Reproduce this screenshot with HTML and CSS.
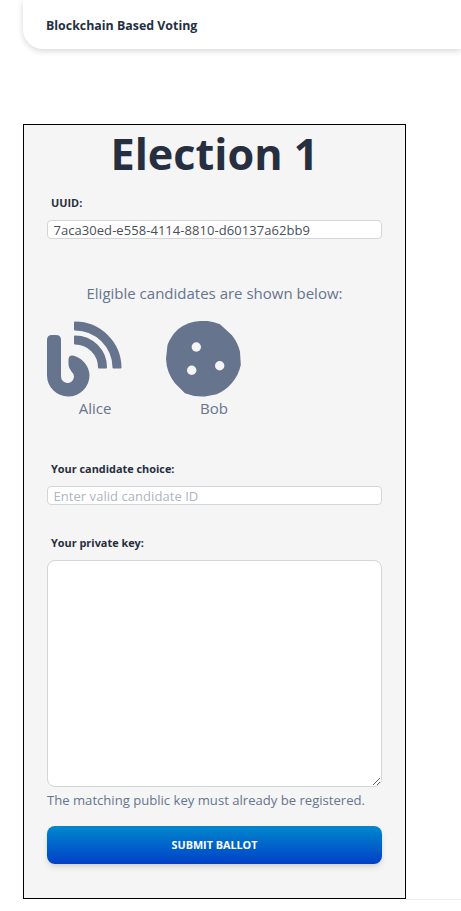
FILE: index.html
```html
<!DOCTYPE html>
<html lang="en">
<head>
<meta charset="utf-8">
<title>Blockchain Based Voting</title>
<link rel="stylesheet" href="styles.css">
</head>
<body>
<header class="nav"><span class="brand">Blockchain Based Voting</span></header>
<main class="card">
  <h1 class="title">Election 1</h1>
  <label class="label label-uuid">UUID:</label>
  <input class="field" type="text" value="7aca30ed-e558-4114-8810-d60137a62bb9">
  <p class="lead">Eligible candidates are shown below:</p>
  <div class="candidates">
    <figure class="candidate">
      <svg class="avatar" viewBox="0 0 75 76" aria-hidden="true">
        <path class="icon-fill" d="M0 19Q0 14 5 14H9Q14 14 14 19V55A6.500 6.500 0 1 0 26.500 53C24.500 50.500 21.500 47 21.500 43V39Q21.500 33.500 27 34.800A21.500 21.500 0 0 1 42.500 54A21.200 21.200 0 0 1 21 75.500A21.200 21.200 0 0 1 0 54.500Z"/>
        <path class="icon-wave" d="M28 1.5A45.5 45.5 0 0 1 73.500 46.500H66.500A38.500 38.500 0 0 0 28 8.500Z"/>
        <path class="icon-wave" d="M28 15.500A31 31 0 0 1 59 46.500H52A24 24 0 0 0 28 22.500Z"/>
      </svg>
      <figcaption>Alice</figcaption>
    </figure>
    <figure class="candidate">
      <svg class="avatar" viewBox="0 0 75 76" aria-hidden="true">
        <path class="icon-fill" d="M34 0A40 40 0 0 1 54 3.300L65.700 14A42 42 0 0 1 74 30.700L74.800 44A42 42 0 0 1 65.700 62.300A42 42 0 0 1 50.700 73.300L39 75.500A44 44 0 0 1 19 72.300L9 62.300A42 42 0 0 1 0 38L1.500 24A42 42 0 0 1 12.300 8A40 40 0 0 1 34 0Z"/>
        <circle class="icon-dot" cx="30.300" cy="26" r="4.700"/>
        <circle class="icon-dot" cx="53.700" cy="44.700" r="4.700"/>
        <circle class="icon-dot" cx="25.700" cy="49.300" r="4.700"/>
      </svg>
      <figcaption>Bob</figcaption>
    </figure>
  </div>
  <label class="label label-choice">Your candidate choice:</label>
  <input class="field" type="text" placeholder="Enter valid candidate ID">
  <label class="label label-key">Your private key:</label>
  <textarea class="keybox"></textarea>
  <p class="hint">The matching public key must already be registered.</p>
  <button class="submit" type="button">SUBMIT BALLOT</button>
</main>
<footer class="foot"></footer>
</body>
</html>
```
FILE: styles.css
```css
* { box-sizing: border-box; }
html, body { margin: 0; padding: 0; }
body {
  background: #fff;
  font-family: "Open Sans", "Noto Sans", sans-serif;
  color: #67748e;
  height: 911px;
  overflow: hidden;
}
.nav {
  height: 49px;
  margin-left: 23px;
  padding: 17px 0 0 23px;
  background: #fff;
  border-bottom-left-radius: 20px;
  box-shadow: 0 2px 6px rgba(0, 0, 0, 0.16);
  clip-path: inset(0 0 -12px -12px);
}
.brand {
  display: block;
  font-size: 12.400px;
  line-height: 17px;
  font-weight: 700;
  color: #252f40;
}
.card {
  width: 383px;
  height: 775px;
  margin: 75px 0 0 23px;
  padding: 0 23px;
  background: #f5f5f5;
  border: 1px solid #000;
  display: flex;
  flex-direction: column;
}
.title {
  margin: 0;
  font-size: 43.200px;
  line-height: 57px;
  font-weight: 700;
  text-align: center;
  color: #252f40;
}
.label {
  display: block;
  padding-left: 4px;
  font-size: 10.900px;
  line-height: 14px;
  font-weight: 700;
  color: #252f40;
}
.label-uuid { margin-top: 14px; }
.label-choice { margin-top: 44px; }
.label-key { margin-top: 31px; }
.field {
  display: block;
  width: 335px;
  height: 19px;
  margin-top: 10px;
  padding: 0 5.500px;
  font: 400 13px/17px "Open Sans", sans-serif;
  letter-spacing: 0.05px;
  color: #495057;
  background: #fff;
  border: 1px solid #d2d6da;
  border-radius: 4px;
  outline: none;
}
.field::placeholder { color: #adb5bd; opacity: 1; }
.lead {
  margin: 44px 0 0;
  font-size: 15px;
  line-height: 20px;
  text-align: center;
}
.candidates {
  display: flex;
  gap: 23px;
  margin-top: 18px;
}
.candidate {
  margin: 0;
  width: 96px;
  text-align: center;
  font-size: 15px;
  line-height: 20px;
}
.avatar { display: block; width: 75px; height: 76px; }
.candidate figcaption { margin-top: 1px; }
.icon-wave { fill: #67748e; stroke: #67748e; stroke-width: 2; stroke-linejoin: round; }
.icon-fill { fill: #67748e; }
.icon-dot { fill: #f5f5f5; }
.keybox {
  display: block;
  width: 335px;
  height: 227px;
  margin-top: 10px;
  background: #fff;
  border: 1px solid #d2d6da;
  border-radius: 8px;
  outline: none;
}
.hint {
  margin: 5px 0 0;
  font-size: 13.100px;
  line-height: 17px;
}
.submit {
  display: block;
  width: 335px;
  height: 38px;
  margin-top: 17px;
  padding: 0;
  border: 0;
  border-radius: 8px;
  background: linear-gradient(180deg, #0088cc, #0040c8);
  box-shadow: 0 4px 7px -1px rgba(0, 0, 0, 0.11), 0 2px 4px -1px rgba(0, 0, 0, 0.07);
  color: #fff;
  font: 700 10.800px/14px "Open Sans", sans-serif;
}
.foot {
  position: absolute;
  left: 406px;
  right: 0;
  top: 899px;
  border-top: 1px solid #eeeeee;
}
```
